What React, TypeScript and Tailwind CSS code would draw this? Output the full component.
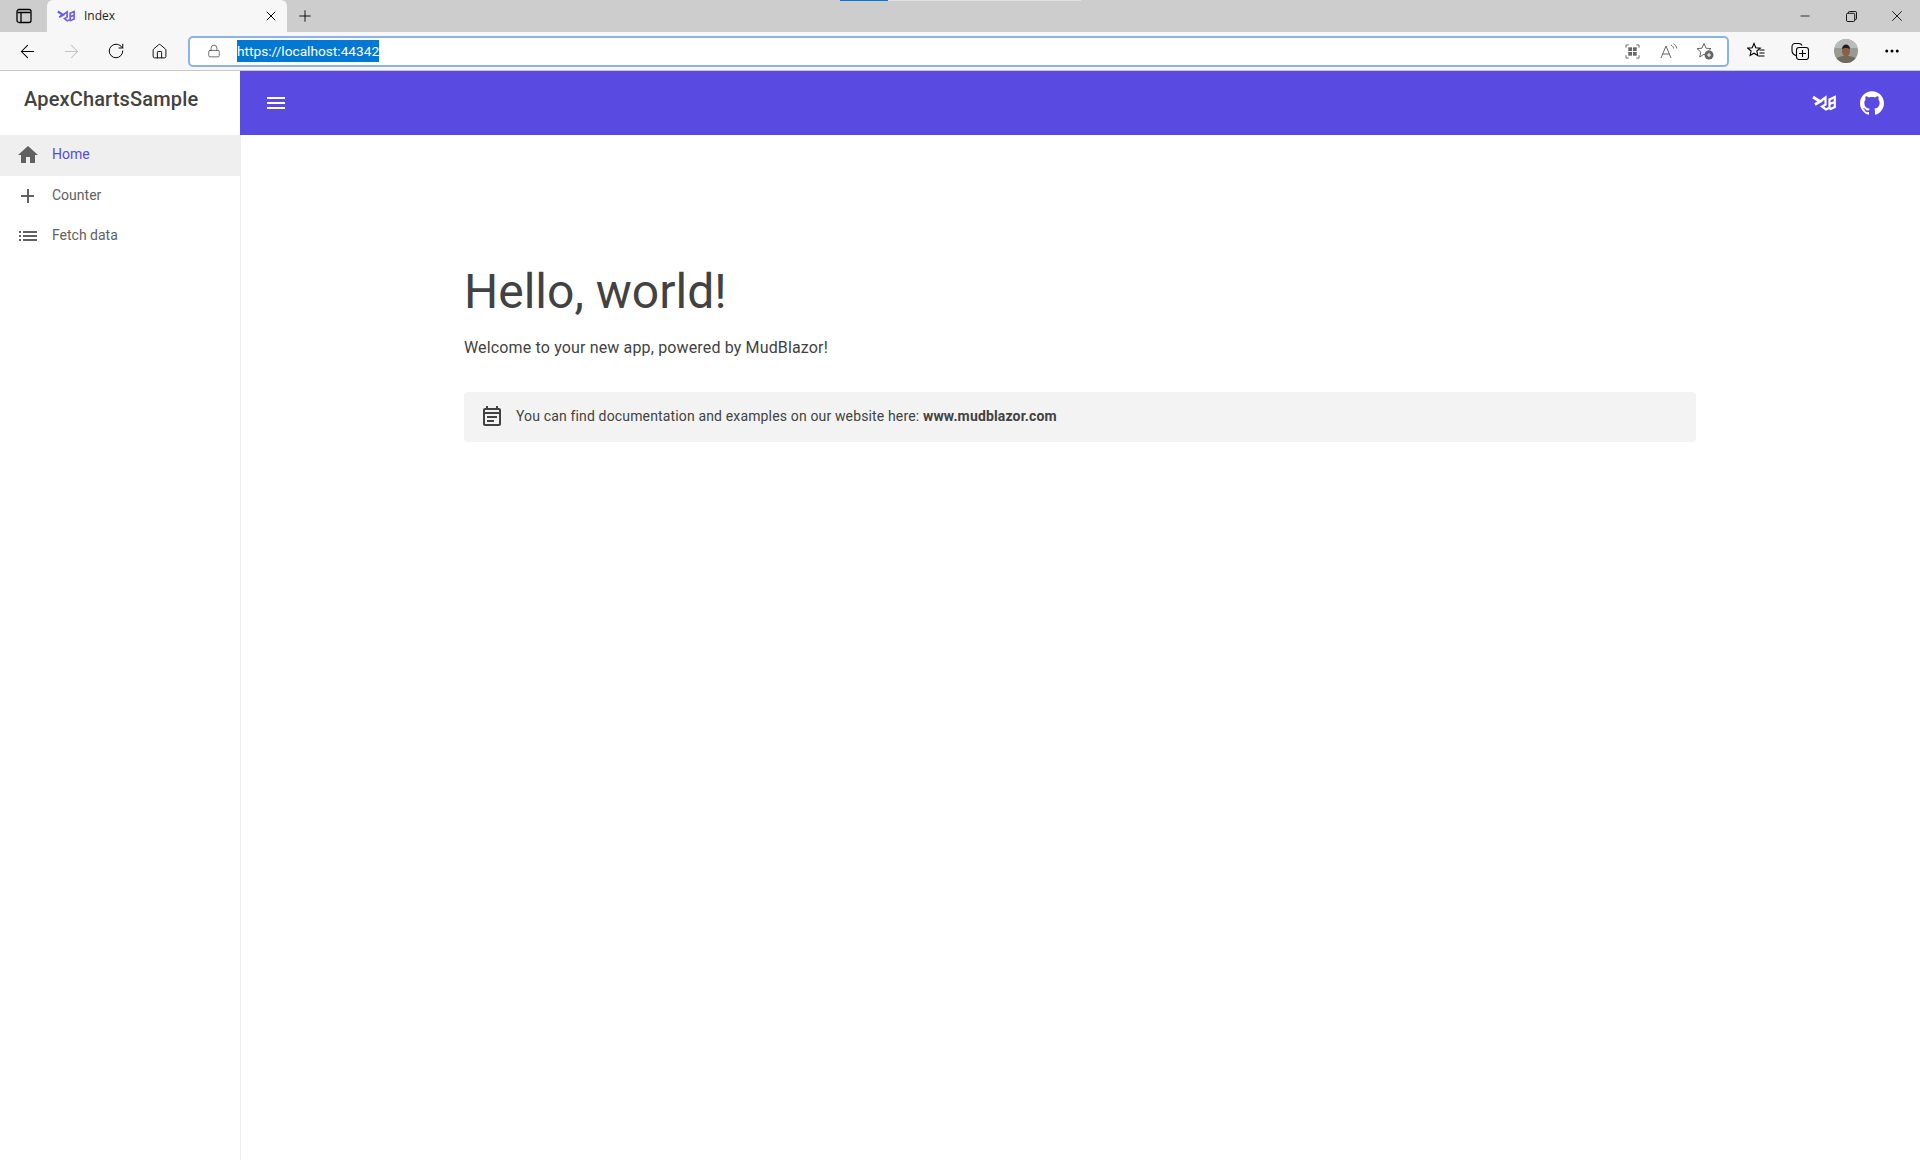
import { ArrowLeft, ArrowRight, RotateCw, Home, Lock, X, Plus, Minus, MoreHorizontal } from "lucide-react";

const MudLogo = ({ className }: { className: string }) => (
  <svg viewBox="0 0 24 16" className={className} fill="none" stroke="currentColor" strokeWidth="2.200" strokeLinejoin="miter">
    <path d="M1 2l7 4.500-5 3" strokeWidth="2.800" />
    <path d="M8 6.500l5.500-4v7L10 11.500l4 3 3-1.500" />
    <path d="M17.500 14V4.500L22.800 2v10l-5.300 2.500M17.500 9l5.300-2" />
  </svg>
);

// material icon paths
const icons = {
  home: "M10 20v-6h4v6h5v-8h3L12 3 2 12h3v8z",
  add: "M19 13h-6v6h-2v-6H5v-2h6V5h2v6h5v2z",
  list: "M3 13h2v-2H3v2zm0 4h2v-2H3v2zm0-8h2V7H3v2zm4 4h14v-2H7v2zm0 4h14v-2H7v2zM7 7v2h14V7H7z",
  menu: "M3 18h18v-2H3v2zm0-5h18v-2H3v2zm0-7v2h18V6H3z",
  note: "M19 4h-1V2h-2v2H8V2H6v2H5c-1.11 0-1.99.9-1.99 2L3 20c0 1.1.89 2 2 2h14c1.100 0 2-.9 2-2V6c0-1.100-.9-2-2-2zm0 16H5V10h14v10zm0-12H5V6h14v2zM7 12h10v2H7zm0 4h7v2H7z",
  github:
    "M12 .297c-6.63 0-12 5.373-12 12 0 5.303 3.438 9.8 8.205 11.385.6.113.82-.258.82-.577 0-.285-.01-1.04-.015-2.04-3.338.724-4.042-1.61-4.042-1.61C4.422 18.07 3.633 17.7 3.633 17.7c-1.087-.744.084-.729.084-.729 1.205.084 1.838 1.236 1.838 1.236 1.07 1.835 2.809 1.305 3.495.998.108-.776.417-1.305.76-1.605-2.665-.3-5.466-1.332-5.466-5.93 0-1.31.465-2.38 1.235-3.22-.135-.303-.54-1.523.105-3.176 0 0 1.005-.322 3.3 1.23.96-.267 1.98-.399 3-.405 1.02.006 2.04.138 3 .405 2.28-1.552 3.285-1.23 3.285-1.23.645 1.653.24 2.873.12 3.176.765.84 1.23 1.91 1.23 3.22 0 4.61-2.805 5.625-5.475 5.92.42.36.81 1.096.81 2.22 0 1.606-.015 2.896-.015 3.286 0 .315.21.69.825.57C20.565 22.092 24 17.592 24 12.297c0-6.627-5.373-12-12-12",
};

const Mi = ({ d, className }: { d: string; className: string }) => (
  <svg viewBox="0 0 24 24" fill="currentColor" className={className}>
    <path d={d} />
  </svg>
);

function TabBar() {
  return (
    <div className="relative flex h-8 items-end bg-[#cdcdcd]">
      {/* loading line */}
      <div className="absolute left-[840px] top-0 flex h-px w-[241px]">
        <div className="w-12 bg-[#0078d4]" />
        <div className="flex-1 bg-[#e2e2e2]" />
      </div>
      <div className="flex h-8 w-[47px] items-center justify-center">
        <svg viewBox="0 0 16 16" className="h-[16px] w-[16px]" fill="none" stroke="#000" strokeWidth="1.300">
          <rect x="1" y="1.500" width="14" height="13" rx="2" />
          <path d="M1.500 4.500h13M5 4.500v9.500" />
        </svg>
      </div>
      <div className="flex h-8 w-[240px] items-center rounded-t-md bg-[#f7f7f7] pl-[10px] pr-2">
        <MudLogo className="h-[12px] w-[18px] text-[#6a5cf0]" />
        <span className="ml-[9px] flex-1 font-['Open_Sans',sans-serif] text-xs text-[#222]">Index</span>
        <X className="h-4 w-4 text-black" strokeWidth={1.5} />
      </div>
      <div className="flex h-8 w-[35px] items-center justify-center">
        <Plus className="h-[18px] w-[18px] text-black" strokeWidth={1.2} />
      </div>
      <div className="ml-auto flex h-8 items-center">
        <div className="flex w-[46px] justify-center">
          <Minus className="h-3.5 w-3.5 text-black" strokeWidth={1.3} />
        </div>
        <div className="flex w-[46px] justify-center">
          <svg viewBox="0 0 12 12" className="h-[11px] w-[11px]" fill="none" stroke="#000" strokeWidth="1">
            <rect x="0.500" y="2.500" width="9" height="9" rx="1.500" />
            <path d="M2.500 2.500V2a1.500 1.500 0 011.500-1.500h6A1.500 1.500 0 0111.500 2v6a1.500 1.500 0 01-1.500 1.500" />
          </svg>
        </div>
        <div className="flex w-[46px] justify-center">
          <X className="h-[18px] w-[18px] text-black" strokeWidth={1.1} />
        </div>
      </div>
    </div>
  );
}

function Toolbar() {
  return (
    <div className="flex h-[39px] items-center border-b border-[#c8c8c8] bg-[#f7f7f7]">
      <div className="flex w-[188px] items-center pl-[5px]">
        <div className="flex w-11 justify-center">
          <ArrowLeft className="h-[21px] w-[21px] text-black" strokeWidth={1.2} />
        </div>
        <div className="flex w-11 justify-center">
          <ArrowRight className="h-[21px] w-[21px] text-[#c4c4c4]" strokeWidth={1.2} />
        </div>
        <div className="flex w-11 justify-center pl-[2px]">
          <RotateCw className="h-[18px] w-[18px] text-black" strokeWidth={1.3} />
        </div>
        <div className="flex w-11 justify-center">
          <Home className="h-[17px] w-[17px] text-black" strokeWidth={1.3} />
        </div>
      </div>
      <div className="flex h-[31px] w-[1541px] items-center rounded-[5px] border-2 border-[#8ab3ec] bg-white">
        <Lock className="ml-[17px] h-[14px] w-[14px] text-[#555]" strokeWidth={1.4} />
        <span className="ml-[16px] bg-[#0078d4] text-[13.700px] leading-[22px] text-white">https://localhost:44342</span>
        <div className="ml-auto flex items-center pr-[13px] text-[#666]">
          <svg viewBox="0 0 16 16" className="h-[15px] w-[15px]" fill="none" stroke="currentColor" strokeWidth="1">
            <path d="M1 4V1h3M12 1h3v3M15 12v3h-3M4 15H1v-3" />
            <rect x="3.500" y="3.500" width="4" height="4" fill="currentColor" stroke="none" />
            <rect x="8.500" y="3.500" width="4" height="4" fill="currentColor" stroke="none" />
            <rect x="3.500" y="8.500" width="4" height="4" fill="currentColor" stroke="none" />
            <rect x="8.500" y="8.500" width="4" height="4" fill="currentColor" stroke="none" />
          </svg>
          <svg viewBox="0 0 18 16" className="ml-[20px] h-[16px] w-[18px]" fill="none" stroke="currentColor" strokeWidth="1">
            <path d="M1 15L6 3l5 12M2.800 11h6.400M11 2c1.500.8 2.300 2 2.600 3.500M13.500 0.800c1.800 1 3 2.700 3.300 4.700" />
          </svg>
          <svg viewBox="0 0 18 18" className="ml-[18px] h-[18px] w-[18px]" fill="none" stroke="currentColor" strokeWidth="1">
            <path d="M8 1.500l2 4.700 5 .4-3.800 3.300 1 4.900L8 12.200 3.700 15l1.100-5-3.800-3.400 5-.4z" />
            <circle cx="13" cy="13" r="4.500" fill="currentColor" stroke="none" />
            <path d="M13 11v4M11 13h4" stroke="#fff" strokeWidth="1.100" />
          </svg>
        </div>
      </div>
      <div className="flex flex-1 items-center pl-[18px] text-black">
        <svg viewBox="0 0 18 18" className="h-[18px] w-[18px]" fill="none" stroke="currentColor" strokeWidth="1.100">
          <path d="M7 1.500l1.800 4.200 4.400.4-3.400 2.900 1 4.500L7 11.200 3.100 13.500l1-4.500L.8 6.100l4.400-.4z" />
          <path d="M12.500 8h5M12.500 11h5M11.500 14h6" />
        </svg>
        <svg viewBox="0 0 18 18" className="ml-[26px] h-[18px] w-[18px]" fill="none" stroke="currentColor" strokeWidth="1.100">
          <path d="M5 13.500C2.500 12.800 1 10.800 1 8.500V4.800C1 3 2.500 1.500 4 1.500h4c1.500 0 2.600.7 3 2" />
          <rect x="5.500" y="5.500" width="12" height="12" rx="2.500" />
          <path d="M11.500 8v7M8 11.500h7" />
        </svg>
        <div className="ml-[25px] h-6 w-6 overflow-hidden rounded-full bg-[#9a9a94]">
          <svg viewBox="0 0 24 24" className="h-6 w-6">
            <rect width="24" height="9" fill="#b9bcbc" />
            <path d="M0 24c1-6 6-7 12-7s11 1 12 7z" fill="#6f6a5e" />
            <ellipse cx="12" cy="12" rx="4" ry="5.500" fill="#8a5f48" />
            <path d="M8 10c0-3 2-4.500 4-4.500s4 1.500 4 4.500c-2-1.500-6-1.500-8 0z" fill="#241d1a" />
          </svg>
        </div>
        <MoreHorizontal className="ml-[25px] h-[18px] w-[18px] text-black" strokeWidth={2} />
      </div>
    </div>
  );
}

const navItems = [
  { label: "Home", icon: icons.home, row: "h-[41px] pb-1 bg-[#efefef]", text: "text-[#594ae2]" },
  { label: "Counter", icon: icons.add, row: "h-10 pb-[3px]", text: "text-[#616161]" },
  { label: "Fetch data", icon: icons.list, row: "h-10 pb-[3px]", text: "text-[#616161]" },
];

export default function App() {
  return (
    <div className="flex h-[1160px] flex-col overflow-hidden bg-white font-['Roboto',sans-serif]">
      <TabBar />
      <Toolbar />
      <div className="flex flex-1">
        <aside className="w-[241px] border-r border-[#eeeeee]">
          <div className="flex h-16 items-center pb-2 pl-6 text-[20px] font-medium tracking-[0.0075em] text-[#424242]">
            ApexChartsSample
          </div>
          <nav>
            {navItems.map((item) => (
              <div key={item.label} className={`flex items-center pl-4 text-sm ${item.row}`}>
                <Mi d={item.icon} className="mt-[2px] h-6 w-6 text-[#616161]" />
                <span className={`ml-3 ${item.text}`}>{item.label}</span>
              </div>
            ))}
          </nav>
        </aside>
        <div className="ml-[-1px] flex flex-1 flex-col">
          <header className="flex h-16 items-center bg-[#594ae2] pl-6 pr-[36px] text-white">
            <Mi d={icons.menu} className="h-6 w-6" />
            <MudLogo className="ml-auto h-[16px] w-[24px]" />
            <Mi d={icons.github} className="ml-6 h-6 w-6" />
          </header>
          <main className="pl-[224px] pr-[224px] pt-[127px] text-[#424242]">
            <h1 className="text-[48px] font-normal leading-[60px]">Hello, world!</h1>
            <p className="mt-[14px] text-base leading-6 tracking-[0.00938em]">
              Welcome to your new app, powered by MudBlazor!
            </p>
            <div className="mt-8 flex h-[50px] items-center rounded bg-[#f3f3f3] pb-[2px] pl-4 text-sm tracking-[0.01071em]">
              <Mi d={icons.note} className="h-6 w-6 text-[#424242]" />
              <span className="ml-3">
                You can find documentation and examples on our website here: <b className="font-bold">www.mudblazor.com</b>
              </span>
            </div>
          </main>
        </div>
      </div>
    </div>
  );
}
